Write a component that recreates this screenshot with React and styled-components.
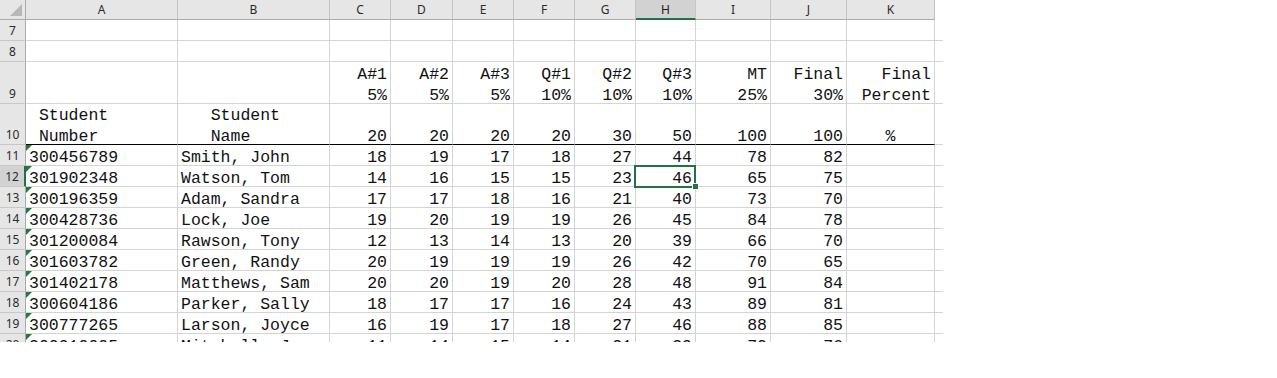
import React from 'react'
import styled, { createGlobalStyle } from 'styled-components'

const GlobalStyle = createGlobalStyle`
  body {
    margin: 0;
    background: #fff;
  }
`

const COLS = [26, 152, 152, 61, 62, 61, 61, 61, 60, 75, 76, 88, 8]
const LETTERS = ['A', 'B', 'C', 'D', 'E', 'F', 'G', 'H', 'I', 'J', 'K', '']
const GRID = '#d4d4d4'
const GREEN = '#217346'

const Viewport = styled.div`
  width: 943px;
  height: 342px;
  overflow: hidden;
`

const Sheet = styled.div`
  display: grid;
  grid-template-columns: ${COLS.map((c) => c + 'px').join(' ')};
  grid-template-rows: 20px 21px 21px 42px 41px repeat(10, 21px);
`

const Corner = styled.div`
  background: #e6e6e6;
  border-right: 1px solid #ababab;
  border-bottom: 1px solid #ababab;
  display: flex;
  align-items: flex-end;
  justify-content: flex-end;
  padding: 0 3px 3px 0;
`

const ColHead = styled.div`
  box-sizing: border-box;
  background: ${(p) => (p.$blank ? '#fff' : p.$selected ? '#d2d2d2' : '#e6e6e6')};
  border-right: ${(p) => (p.$blank ? 'none' : '1px solid #c4c4c4')};
  border-bottom: ${(p) =>
    p.$blank ? 'none' : p.$selected ? `2px solid ${GREEN}` : '1px solid #ababab'};
  display: flex;
  align-items: center;
  justify-content: center;
  font-family: 'Noto Sans', 'Liberation Sans', sans-serif;
  font-size: 12px;
  color: ${(p) => (p.$selected ? '#1a1a1a' : '#2b2b2b')};
  padding-top: ${(p) => (p.$selected ? '1px' : '0')};
`

const RowHead = styled.div`
  box-sizing: border-box;
  background: ${(p) => (p.$selected ? '#d2d2d2' : '#e6e6e6')};
  border-right: ${(p) => (p.$selected ? `2px solid ${GREEN}` : '1px solid #ababab')};
  border-bottom: 1px solid #c8c8c8;
  display: flex;
  align-items: flex-end;
  justify-content: center;
  padding-bottom: 1px;
  font-family: 'Noto Sans', 'Liberation Sans', sans-serif;
  font-size: 12px;
  color: #2b2b2b;
`

const Cell = styled.div`
  box-sizing: border-box;
  position: relative;
  display: flex;
  flex-direction: column;
  justify-content: flex-end;
  align-items: ${(p) =>
    p.$align === 'right' ? 'flex-end' : p.$align === 'center' ? 'center' : 'flex-start'};
  padding: 0 3px;
  border-right: ${(p) => (p.$edge ? 'none' : `1px solid ${GRID}`)};
  border-bottom: 1px solid ${(p) => (p.$rule ? '#000' : GRID)};
  font-family: 'Liberation Mono', 'Courier New', monospace;
  font-size: 16.5px;
  color: #111;
`

const CellText = styled.div`
  white-space: pre;
  line-height: 21px;
  margin-bottom: -3px;
  text-align: ${(p) => p.$align || 'left'};
`

const ErrorMark = styled.span`
  position: absolute;
  top: 0;
  left: 0;
  width: 0;
  height: 0;
  border-top: 6px solid #1e7b3c;
  border-right: 6px solid transparent;
`

const Selection = styled.span`
  position: absolute;
  top: -1px;
  left: -2px;
  right: -1px;
  bottom: -2px;
  border: 2px solid ${GREEN};
  z-index: 2;
  pointer-events: none;
`

const FillHandle = styled.span`
  position: absolute;
  right: -4px;
  bottom: -4px;
  width: 5px;
  height: 5px;
  background: ${GREEN};
  border: 1px solid #fff;
  z-index: 3;
`

const header9 = ['A#1\n5%', 'A#2\n5%', 'A#3\n5%', 'Q#1\n10%', 'Q#2\n10%', 'Q#3\n10%', 'MT\n25%', 'Final\n30%', 'Final\nPercent']
const totals = ['20', '20', '20', '20', '30', '50', '100', '100']

const students = [
  ['300456789', 'Smith, John', 18, 19, 17, 18, 27, 44, 78, 82],
  ['301902348', 'Watson, Tom', 14, 16, 15, 15, 23, 46, 65, 75],
  ['300196359', 'Adam, Sandra', 17, 17, 18, 16, 21, 40, 73, 70],
  ['300428736', 'Lock, Joe', 19, 20, 19, 19, 26, 45, 84, 78],
  ['301200084', 'Rawson, Tony', 12, 13, 14, 13, 20, 39, 66, 70],
  ['301603782', 'Green, Randy', 20, 19, 19, 19, 26, 42, 70, 65],
  ['301402178', 'Matthews, Sam', 20, 20, 19, 20, 28, 48, 91, 84],
  ['300604186', 'Parker, Sally', 18, 17, 17, 16, 24, 43, 89, 81],
  ['300777265', 'Larson, Joyce', 16, 19, 17, 18, 27, 46, 88, 85],
  ['300910005', 'Mitchell, Joe', 11, 14, 15, 14, 21, 39, 70, 76],
]

function CornerMark() {
  return (
    <svg width="12" height="12" viewBox="0 0 12 12">
      <polygon points="12,0 12,12 0,12" fill="#b8b8b8" />
    </svg>
  )
}

function Text({ value, align }) {
  return <CellText $align={align}>{value}</CellText>
}

function BlankRow({ n }) {
  return (
    <>
      <RowHead>{n}</RowHead>
      {LETTERS.map((l, i) => (
        <Cell key={i} $edge={i === 11} />
      ))}
    </>
  )
}

export default function App() {
  return (
    <Viewport>
      <GlobalStyle />
      <Sheet>
        <Corner>
          <CornerMark />
        </Corner>
        {LETTERS.map((l, i) => (
          <ColHead key={i} $selected={l === 'H'} $blank={l === ''}>
            {l}
          </ColHead>
        ))}

        <BlankRow n={7} />
        <BlankRow n={8} />

        <RowHead>9</RowHead>
        <Cell />
        <Cell />
        {header9.map((h, i) => (
          <Cell key={i} $align="right">
            <Text value={h} align="right" />
          </Cell>
        ))}
        <Cell $edge />

        <RowHead>10</RowHead>
        <Cell $rule>
          <Text value={' Student\n Number'} />
        </Cell>
        <Cell $rule>
          <Text value={'   Student\n   Name'} />
        </Cell>
        {totals.map((t, i) => (
          <Cell key={i} $align="right" $rule>
            <Text value={t} />
          </Cell>
        ))}
        <Cell $align="center" $rule>
          <Text value="%" />
        </Cell>
        <Cell $edge />

        {students.map((s, r) => {
          const rowNo = 11 + r
          return (
            <React.Fragment key={rowNo}>
              <RowHead $selected={rowNo === 12}>{rowNo}</RowHead>
              <Cell>
                <ErrorMark />
                <Text value={s[0]} />
              </Cell>
              <Cell>
                <Text value={s[1]} />
              </Cell>
              {s.slice(2).map((v, i) => (
                <Cell key={i} $align="right">
                  <Text value={String(v)} />
                  {rowNo === 12 && i === 5 && (
                    <>
                      <Selection />
                      <FillHandle />
                    </>
                  )}
                </Cell>
              ))}
              <Cell />
              <Cell $edge />
            </React.Fragment>
          )
        })}
      </Sheet>
    </Viewport>
  )
}
